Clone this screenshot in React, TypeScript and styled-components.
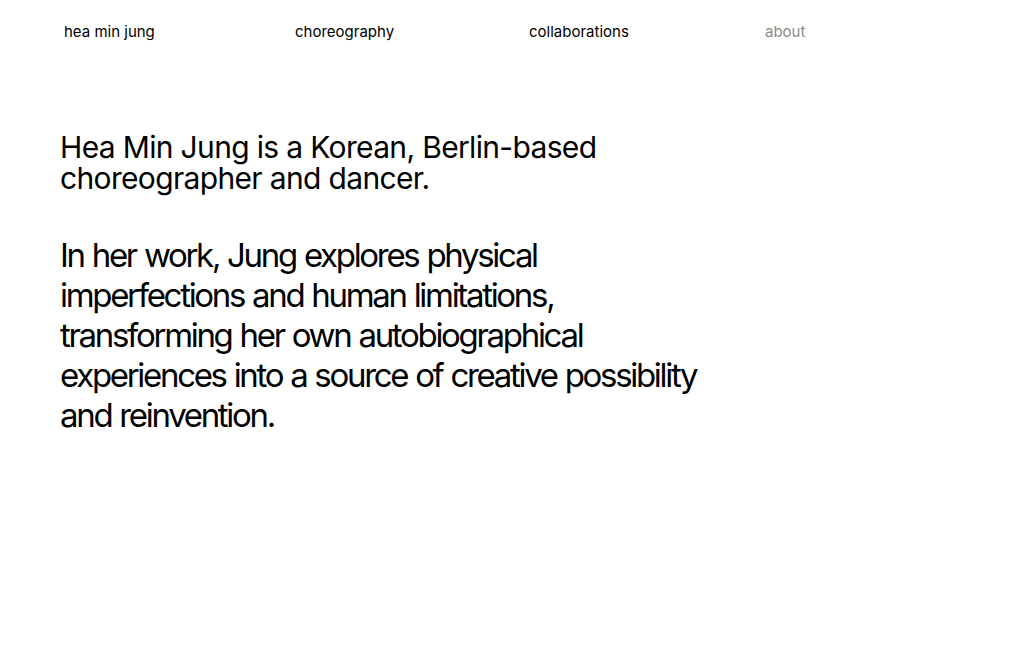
import { FC } from 'react'
import styled, { createGlobalStyle } from 'styled-components'

const GlobalStyle = createGlobalStyle`
  html, body {
    margin: 0;
    padding: 0;
    background: #fff;
  }
  body {
    font-family: Inter, 'Liberation Sans', Arial, sans-serif;
    color: #000;
    -webkit-font-smoothing: antialiased;
  }
`

const Page = styled.div`
  padding: 0 60px;
`

const Nav = styled.nav`
  display: grid;
  grid-template-columns: 231px 234px 236px 1fr;
  padding: 21px 0 0 4px;
  height: 40px;
`

const NavLink = styled.a<{ $muted?: boolean }>`
  font-size: 15px;
  line-height: 20px;
  letter-spacing: 0;
  color: ${(p) => (p.$muted ? '#8a8a8a' : '#000')};
  text-decoration: none;
  cursor: pointer;
`

const Content = styled.main`
  max-width: 680px;
  padding-top: 71px;
`

const Intro = styled.p`
  margin: 0;
  font-size: 30px;
  line-height: 31px;
  letter-spacing: -0.022em;
`

const Body = styled.p`
  max-width: 664px;
  margin: 41px 0 0;
  font-size: 33px;
  line-height: 40px;
  letter-spacing: -0.07em;
  word-spacing: 0.03em;
`

const links = [
  { label: 'hea min jung' },
  { label: 'choreography' },
  { label: 'collaborations' },
  { label: 'about', muted: true },
]

const App: FC = () => {
  return (
    <>
      <GlobalStyle />
      <Page>
        <Nav>
          {links.map((l) => (
            <div key={l.label}>
              <NavLink $muted={l.muted}>{l.label}</NavLink>
            </div>
          ))}
        </Nav>
        <Content>
          <Intro>
            Hea Min Jung is a Korean, Berlin-based choreographer and dancer.
          </Intro>
          <Body>
            In her work, Jung explores physical imperfections and human
            limitations, transforming her own autobiographical experiences into
            a source of creative possibility and reinvention.
          </Body>
        </Content>
      </Page>
    </>
  )
}

export default App
